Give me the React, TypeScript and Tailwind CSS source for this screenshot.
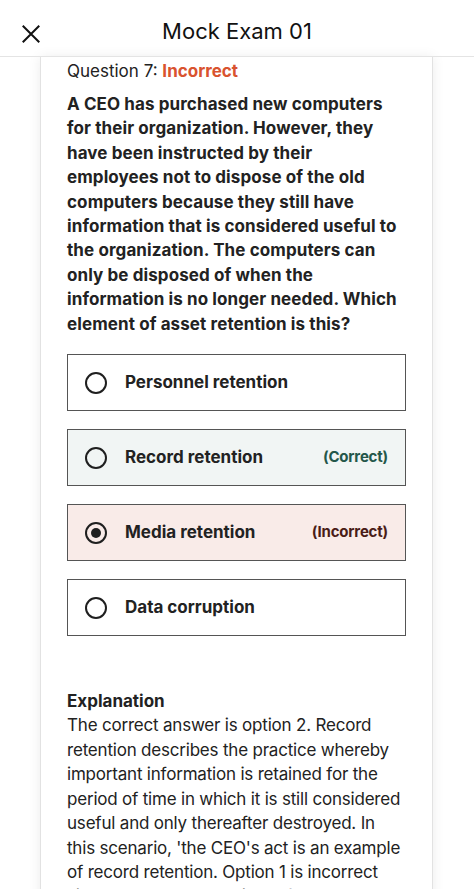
import React from 'react';

type Option = {
  label: string;
  state?: 'correct' | 'incorrect';
  selected?: boolean;
};

const OPTIONS: Option[] = [
  { label: 'Personnel retention' },
  { label: 'Record retention', state: 'correct' },
  { label: 'Media retention', state: 'incorrect', selected: true },
  { label: 'Data corruption' },
];

const OptionRow: React.FC<{ option: Option }> = ({ option }) => {
  const bg =
    option.state === 'correct'
      ? 'bg-[#f1f5f4]'
      : option.state === 'incorrect'
        ? 'bg-[#f9ebe8]'
        : 'bg-white';
  return (
    <div className={`flex items-center h-[57px] border border-[#555] pl-[17px] pr-[17px] ${bg}`}>
      <span className="w-[22px] h-[22px] rounded-full border-2 border-[#1f1f1f] flex items-center justify-center shrink-0">
        {option.selected && <span className="w-[10px] h-[10px] rounded-full bg-[#1f1f1f]" />}
      </span>
      <span className="ml-[18px] font-bold text-[17px] text-[#222]">{option.label}</span>
      {option.state === 'correct' && (
        <span className="ml-auto font-bold text-[15px] tracking-[-0.2px] text-[#24574a]">(Correct)</span>
      )}
      {option.state === 'incorrect' && (
        <span className="ml-auto font-bold text-[15px] tracking-[-0.2px] text-[#4a1c17]">(Incorrect)</span>
      )}
    </div>
  );
};

const App: React.FC = () => {
  return (
    <div className="min-h-screen bg-white text-[#222]" style={{ fontFamily: 'Inter, "Liberation Sans", sans-serif' }}>
      <header className="h-[57px] flex items-center relative border-b border-[#e4e4e4] pt-[7px]">
        <button className="absolute left-[20px] top-[23px] w-[22px] h-[22px]" aria-label="Close">
          <svg viewBox="0 0 24 24" className="w-[22px] h-[22px]" fill="none" stroke="#111" strokeWidth="2.2">
            <path d="M3 3 L21 21 M21 3 L3 21" />
          </svg>
        </button>
        <h1 className="flex-1 text-center text-[22px] text-[#111]">Mock Exam 01</h1>
      </header>

      <main>
        <div className="ml-[40px] w-[393px] bg-white border-x border-[#e2e2e2] shadow-[0_0_12px_rgba(0,0,0,0.08)] px-[26px] pt-[2px] pb-10">
          <p className="text-[17px] leading-[24px]">
            Question 7: <span className="font-bold text-[#d9532f]">Incorrect</span>
          </p>
          <p className="mt-[9px] font-bold text-[17px] leading-[24.4px] tracking-[0.1px] text-[#222]">
            A CEO has purchased new computers for their organization. However, they have been
            instructed by their employees not to dispose of the old computers because they still
            have information that is considered useful to the organization. The computers can only
            be disposed of when the information is no longer needed. Which element of asset
            retention is this?
          </p>

          <div className="mt-[18px] flex flex-col gap-[18px]">
            {OPTIONS.map((o) => (
              <OptionRow key={o.label} option={o} />
            ))}
          </div>

          <div className="mt-[53px]">
            <h2 className="font-bold text-[17px] leading-[24.4px]">Explanation</h2>
            <p className="text-[17px] leading-[24.4px] tracking-[-0.2px]">
              The correct answer is option 2. Record retention describes the practice whereby
              important information is retained for the period of time in which it is still
              considered useful and only thereafter destroyed. In this scenario, 'the CEO's act is
              an example of record retention. Option 1 is incorrect since personnel retention refers
              to the efforts the organization makes to keep its employees.
            </p>
          </div>
        </div>
      </main>
    </div>
  );
};

export default App;
